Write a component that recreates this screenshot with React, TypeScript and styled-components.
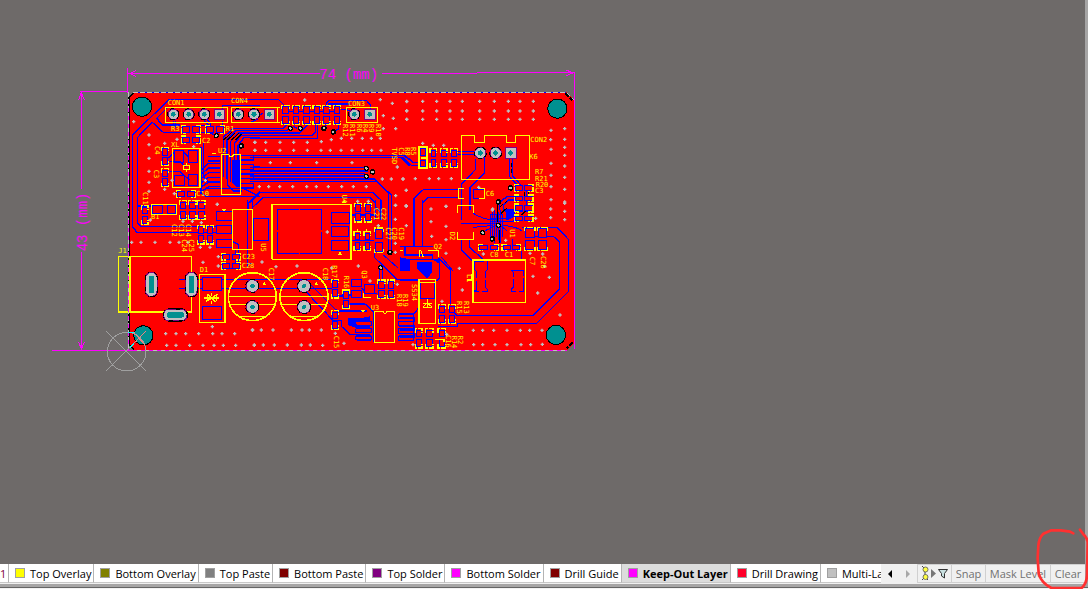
import React from 'react';
import styled, { createGlobalStyle } from 'styled-components';

const Global = createGlobalStyle`
  * { box-sizing: border-box; }
  body { margin: 0; font-family: "Open Sans", "Noto Sans", sans-serif; font-size: 11px; }
`;

const Window = styled.div`
  display: flex;
  flex-direction: column;
  min-height: 100vh;
  background: #6e6a69;
`;

const Workspace = styled.main`
  flex: 1;
  min-height: 0;
  border-right: 3px solid #a6a5a5;
`;

const Board = styled.svg`
  display: block;
  width: 600px;
  height: 400px;
`;

const Footer = styled.footer`
  position: relative;
`;

const Bar = styled.div`
  display: flex;
  height: 20px;
  background: #f0f0f0;
  border-right: 3px solid #a6a5a5;
`;

const Tabs = styled.nav`
  display: flex;
  flex: 1;
  min-width: 0;
  overflow: hidden;
`;

const Tab = styled.button<{ $active?: boolean }>`
  display: flex;
  flex: none;
  align-items: center;
  gap: 5px;
  height: 19px;
  padding: 0 2px 0 6px;
  border: 0;
  border-left: 1px solid #b4b4b4;
  border-bottom: 1px solid #c8c8c8;
  background: ${(p) => (p.$active ? '#dcdcdc' : '#fff')};
  color: #000;
  font: inherit;
  font-weight: ${(p) => (p.$active ? 700 : 400)};
  white-space: nowrap;
`;

const FirstTab = styled(Tab)`
  width: 8px;
  padding: 0;
  border-left: 0;
  color: #800040;
`;

const Swatch = styled.span<{ $color: string }>`
  width: 10px;
  height: 10px;
  border: 1px solid #a0a0a0;
  background: ${(p) => p.$color};
`;

const Tools = styled.div`
  display: flex;
  flex: none;
  height: 19px;
`;

const Arrow = styled.button`
  display: flex;
  align-items: center;
  justify-content: center;
  width: 18px;
  padding: 0;
  border: 0;
  background: #f0f0f0;
`;

const Tool = styled.button<{ $width: number }>`
  display: flex;
  align-items: center;
  justify-content: center;
  width: ${(p) => p.$width}px;
  padding: 0;
  border: 1px solid #d0d0d0;
  border-right: 0;
  background: #f0f0f0;
  color: #707070;
  font: inherit;
  white-space: nowrap;
`;

const Edge = styled.div`
  height: 5px;
  background: #f2f2f2;
  border-top: 3px solid #a6a5a5;

  &::before {
    content: "";
    display: block;
    height: 1px;
    background: #666;
  }
`;

const Markup = styled.svg`
  position: absolute;
  right: 0;
  bottom: 0;
  width: 68px;
  height: 74px;
  pointer-events: none;
`;

const YELLOW = '#ffff00';
const BLUE = '#0000ff';
const MAGENTA = '#ff00ff';
const TEAL = '#009090';
const GRAY = '#c0c0c0';

type Pt = [number, number];
type Box = [number, number, number, number];

/* The drawing uses three units to a pixel; a Region shifts its parts to one area of the board. */
const Region = ({ x, y, children }: { x: number; y: number; children: React.ReactNode }) => (
  <g transform={`translate(${x * 3} ${y * 3})`}>{children}</g>
);

const Trace = ({ d, w = 4 }: { d: string; w?: number }) => (
  <path d={d} fill="none" stroke={BLUE} strokeWidth={w} />
);
const Silk = ({ d, w = 3 }: { d: string; w?: number }) => (
  <path d={d} fill="none" stroke={YELLOW} strokeWidth={w} />
);
const Copper = ({ boxes }: { boxes: Box[] }) => (
  <>
    {boxes.map(([x, y, w, h]) => (
      <rect key={`${x},${y}`} x={x} y={y} width={w} height={h} fill="#ff0000" stroke={BLUE} strokeWidth={3} />
    ))}
  </>
);

const Chips = ({ boxes }: { boxes: Box[] }) => (
  <>
    {boxes.map(([x, y, w, h]) => {
      const wide = w > h;
      const a = wide ? w * 0.38 : h * 0.36;
      const pads: Box[] = wide
        ? [[x + 3, y + 3, a, h - 6], [x + w - a - 3, y + 3, a, h - 6]]
        : [[x + 3, y + 4, w - 6, a], [x + 3, y + h - a - 4, w - 6, a]];
      const ends = wide
        ? `M${x + 14} ${y}H${x}V${y + h}H${x + 14}M${x + w - 14} ${y}H${x + w}V${y + h}H${x + w - 14}`
        : `M${x} ${y + 12}V${y}H${x + w}V${y + 12}M${x} ${y + h - 12}V${y + h}H${x + w}V${y + h - 12}`;
      return (
        <g key={`${x},${y}`}>
          <Copper boxes={pads} />
          <path d={ends} fill="none" stroke={YELLOW} strokeWidth={4} strokeDasharray="18 3" />
        </g>
      );
    })}
  </>
);

const Stitches = ({ at }: { at: Pt[] }) => (
  <path
    d={at.map(([x, y]) => `M${x - 5} ${y}h10M${x} ${y - 5}v10`).join('')}
    stroke={GRAY}
    strokeWidth={4}
    fill="none"
    shapeRendering="auto"
  />
);

const Vias = ({ at }: { at: Pt[] }) => (
  <>
    {at.map(([x, y]) => (
      <circle key={`${x},${y}`} cx={x} cy={y} r={6} fill={GRAY} stroke="#000" strokeWidth={4} />
    ))}
  </>
);

const Pin = ({ x, y, square, r = 16, hole = 8 }: { x: number; y: number; square?: boolean; r?: number; hole?: number }) => (
  <g>
    {square ? (
      <rect x={x - r} y={y - r} width={r * 2} height={r * 2} fill={GRAY} stroke="#800080" strokeWidth={3} />
    ) : (
      <>
        <circle cx={x} cy={y} r={r} fill={GRAY} stroke="#800080" strokeWidth={3} />
        <circle cx={x} cy={y} r={r + 1} fill="none" stroke="#000" strokeWidth={3} strokeDasharray="14 8" />
      </>
    )}
    <path d={`M${x - hole} ${y}H${x + hole}M${x} ${y - hole}V${y + hole}`} stroke={TEAL} strokeWidth={4} />
    <circle cx={x} cy={y} r={hole - 1} fill={TEAL} />
  </g>
);

const Mount = ({ x, y }: { x: number; y: number }) => (
  <circle cx={x} cy={y} r={29} fill={TEAL} stroke="#000" strokeWidth={3} />
);

const Slot = ({ box: [x, y, w, h] }: { box: Box }) => (
  <g>
    <rect x={x} y={y} width={w} height={h} rx={17} fill={GRAY} stroke="#000" strokeWidth={4} />
    <rect x={x + 1} y={y + 1} width={w - 2} height={h - 2} rx={16} fill="none" stroke="#800080" strokeWidth={3} strokeDasharray="20 12" />
    <rect x={x + 10} y={y + 10} width={w - 20} height={h - 20} rx={6} fill={TEAL} />
  </g>
);

/* [text, x, y, rotation] with x, y at the baseline start */
type Mark = [string, number, number, number?];
const Marks = ({ list }: { list: Mark[] }) => (
  <g fill={YELLOW} fontFamily='"DejaVu Sans Mono", monospace' fontSize={21}>
    {list.map(([t, x, y, r = 0]) => (
      <text key={`${t},${x}`} transform={`translate(${x} ${y}) rotate(${r})`}>{t}</text>
    ))}
  </g>
);

const Capacitor = ({ x, y }: { x: number; y: number }) => (
  <g>
    <circle cx={x} cy={y} r={72} fill="none" stroke={YELLOW} strokeWidth={5} />
    <Silk d={`M${x - 72} ${y}H${x + 72}M${x - 68} ${y + 22}H${x + 68}M${x - 40} ${y + 59}H${x + 40}`} />
    <Pin x={x} y={y - 32} r={19} hole={7} />
    <Pin x={x} y={y + 31} r={19} hole={7} />
  </g>
);

const steps = (n: number) => Array.from({ length: n }, (_, i) => i);

const Pcb = () => (
  <Board viewBox="0 0 1800 1200" shapeRendering="crispEdges" role="img" aria-label="PCB layout">
    <path d="M402 276H1698L1722 300V1030L1702 1051H402L384 1035V292Z" fill="#ff0000" />
    <path d="M402 277L387 292V1033L402 1050" fill="none" stroke="#000" strokeWidth={4} />
    <path d="M1696 281L1717 302M1718 1028L1700 1046" stroke="#000" strokeWidth={6} strokeDasharray="14 3" />
    <path d="M400 278H1698" stroke={BLUE} strokeWidth={4} />

    <Region x={100} y={60}>
      <Trace d="M97 430V226L206 119H480M113 438V232L157 187L190 217H240M170 175L187 195H240M170 175L200 145M113 438H155" />
      <Trace d="M301 196H318M301 218H318M220 182V200M226 182V205M313 182L328 196M320 178L332 190V220L348 226M367 150V137H480M367 182V220M310 250V350L325 365H360M303 262V400L320 410H480M320 385H430L480 410" />
      <Trace d={steps(5).map((i) => `M${370 + i * 11} ${350 + i * 8}V${232 + i * 6}L${400 + i * 8} ${205 + i * 7}H480`).join('')} />
      <Trace d={steps(6).map((i) => `M303 ${330 + i * 13}L326 ${310 + i * 14}H360`).join('')} />
      <Trace d={steps(4).map((i) => `M424 ${286 + i * 28}H460V${300 + i * 28}H424`).join('')} />
      <Trace d="M325 290H360M325 303H360M460 320H480M460 334H480M460 349H480M460 358H480M444 450V430L480 394M383 330V375L400 393H425" />
      <path d="M397 300H422V380H408L397 368Z" fill={BLUE} />
      <path d="M370 240L395 218M382 240L405 220M394 240L417 220M406 240L425 222" stroke="#000" strokeWidth={3} />
      <Copper boxes={[[223, 270, 28, 36], [264, 270, 29, 36], [223, 345, 30, 32], [264, 343, 29, 34]]} />
      <Trace d="M251 275L264 290M206 295L223 275M206 335H240L268 360M206 305H240L258 320" />
      <Silk d="M197 142H383V188H197ZM540 142H395V188H540" />
      <Silk d="M217 266H301V382H217Z" w={4} />
      <Silk d="M300 266V384" w={6} />
      <Silk d="M364 283H385Q393 298 402 283H422V403H364Z" />
      <Silk d="M250 317H269V327H250ZM259 309V317M259 327V335" />
      <Pin x={220} y={163} /><Pin x={266} y={163} /><Pin x={313} y={163} /><Pin x={358} y={163} square />
      <Pin x={415} y={163} /><Pin x={462} y={163} />
      <Chips boxes={[[245, 196, 56, 24], [317, 196, 56, 24], [245, 228, 56, 22], [230, 391, 56, 22], [184, 262, 22, 54], [184, 326, 22, 54]]} />
      <Vias at={[[349, 227], [424, 258]]} />
      <Stitches at={[[101, 185], [147, 225], [147, 254], [147, 295], [147, 334], [147, 367], [147, 394], [231, 238], [281, 260], [194, 250], [216, 361], [316, 361], [223, 401], [194, 388], [464, 247], [464, 271], [352, 433]]} />
      <Mount x={126} y={140} />
      <Marks list={[['CON1', 203, 134], ['CON4', 393, 129], ['R3', 213, 213], ['R1', 377, 213], ['C2', 306, 248], ['XL', 213, 262], ['U2', 354, 280], ['C10', 289, 408], ['C4', 165, 258, 90], ['C3', 163, 329, 90], ['C11', 128, 396, 90]]} />
      <Silk d="M337 281H347" w={4} />
    </Region>

    <Region x={250} y={60}>
      <Trace d="M0 119H86L104 137M229 135V128L236 122H350L362 135V150M236 137V132H300M272 148H290L305 158M95 155H270M0 205H100L115 190M0 212H108L120 206M0 219H150L172 195M0 227H185L197 215V195M0 235H203V195" />
      <Trace d="M0 286H460L480 300M0 293H452L480 318M0 323H345M0 341H345M0 357H375L416 400V570M0 364H380L424 405V570M0 428L30 398H370L393 420V480M10 440L38 413H360L377 430V480" />
      <Trace d="M0 334H355M0 349H345" w={6} />
      <Trace d="M130 200L142 206M222 205L232 192M250 215L265 208V195M0 175L40 160M0 188L25 175" />
      <Silk d="M0 142H83V188H0M290 142H383V188H290Z" />
      <Pin x={12} y={163} /><Pin x={58} y={163} square /><Pin x={313} y={163} /><Pin x={359} y={163} square />
      <Chips boxes={[[94, 136, 24, 58], [127, 136, 22, 58], [157, 136, 24, 58], [189, 136, 22, 58], [218, 136, 22, 58], [250, 136, 22, 58]]} />
      <Vias at={[[121, 205], [151, 205], [222, 205], [250, 216], [349, 325], [368, 336], [349, 349]]} />
      <Stitches at={[[164, 120], [391, 119], [427, 130], [470, 125], [470, 152], [470, 178], [400, 167], [430, 175], [400, 206], [437, 206], [15, 247], [47, 247], [90, 247], [131, 247], [172, 247], [214, 245], [244, 239], [274, 235], [305, 235], [337, 235], [364, 235], [391, 235], [15, 271], [47, 271], [90, 271], [131, 271], [172, 271], [213, 271], [241, 271], [273, 271], [306, 271], [338, 271], [365, 271], [393, 271], [61, 308], [121, 308], [200, 308], [306, 308], [442, 321], [28, 380], [56, 380], [89, 380], [128, 380], [170, 380], [199, 380], [235, 380], [275, 380], [310, 380], [349, 380], [397, 357], [424, 357], [459, 357], [469, 391], [437, 407], [437, 436], [469, 437]]} />
      <Marks list={[['CON3', 294, 137], ['R12', 280, 192, 90], ['R11', 300, 192, 90], ['R6', 320, 192, 90], ['R4', 340, 192, 90], ['R9', 358, 192, 90], ['R10', 378, 192, 90], ['TVSD', 425, 262, 90], ['C5', 447, 262, 90], ['R8', 465, 262, 90], ['U4', 277, 404, 90]]} />
    </Region>

    <Region x={400} y={60}>
      <Trace d="M42 450V415L70 389H180M67 450V430L85 412H175M173 275H225M173 284H225M227 296V328L184 372V480M253 290V340L210 383V450M329 297V350L352 375M337 297V348L362 374M0 286H15L40 308H60M0 293H10L35 317H60M299 450V428L320 410H345M310 450V435L325 420H345M380 390V450" />
      <path d="M333 310V345M300 440L320 425M384 395V450M372 395V420" stroke="#000" strokeWidth={3} strokeDasharray="12 5" />
      <Silk d="M184 226H223V247H254V226H320V247H347V226H389V358H184Z" />
      <Silk d="M57 260H81V324H57Z" w={5} />
      <Copper boxes={[[60, 266, 17, 20], [60, 301, 17, 18]]} />
      <path d="M62 291H77V298H62Z" fill={YELLOW} />
      <Chips boxes={[[90, 266, 20, 56], [121, 266, 20, 56], [152, 266, 20, 56], [343, 374, 56, 20], [343, 405, 56, 20], [343, 436, 56, 20]]} />
      <Copper boxes={[[220, 388, 32, 27]]} />
      <Silk d="M191 386H176V415H191M236 386H253V415H236M173 455V437H220V455" />
      <Pin x={241} y={279} r={17} /><Pin x={287} y={279} r={17} /><Pin x={332} y={279} square r={17} />
      <Vias at={[[332, 384], [295, 425]]} />
      <Stitches at={[20, 68, 110, 150, 187, 239, 283, 325, 360, 400].flatMap((x): Pt[] => [[x, 124], [x, 153], [x, 178]])} />
      <Stitches at={[[494, 206], [453, 211], [452, 239], [494, 238], [494, 262], [453, 268], [494, 286], [453, 310], [494, 318], [453, 346], [494, 352], [453, 380], [494, 388], [453, 419], [494, 430], [68, 250], [100, 256], [131, 256], [9, 357], [46, 356], [88, 356], [116, 356], [154, 356], [19, 391], [19, 438], [138, 439], [236, 382], [278, 447]]} />
      <Mount x={472} y={146} />
      <Marks list={[['CON2', 391, 247], ['K6', 388, 297], ['R7', 405, 342], ['R21', 405, 362], ['R20', 407, 381], ['C3', 405, 398], ['C6', 257, 407], ['R5', 34, 261, 90]]} />
    </Region>

    <Region x={100} y={200}>
      <Trace d="M97 0V80L112 98H395M113 0V70L122 79H395M113 18H125M236 238H480M236 265H480M400 125L416 135V205H370M443 0V205" />
      <Trace d="M407 150V200M457 190H443M457 0V50" w={3} />
      <Copper boxes={[[350, 34, 46, 26], [350, 76, 45, 25], [350, 118, 47, 25], [307, 232, 58, 39], [307, 319, 58, 39], [158, 16, 30, 24], [201, 16, 26, 24]]} />
      <Silk d="M398 28H457V148H398ZM154 13H230V43H154ZM55 169H275V337H55Z" />
      <Silk d="M298 223H376V367H298Z" w={4} />
      <Silk d="M90 169V337M55 336H275M374 223V367" w={5} />
      <Silk d="M335 278V288M313 294H330M340 294H358M319 304L353 283M322 283L349 307M322 283V300M349 287V304M335 302V313" w={4} />
      <Chips boxes={[[124, 17, 20, 56], [238, 2, 22, 56], [266, 2, 22, 56], [293, 2, 22, 56], [292, 76, 20, 56], [320, 76, 20, 56], [365, 160, 56, 20], [365, 188, 56, 20]]} />
      <path d="M366 28H378L372 36Z" fill={YELLOW} />
      <Slot box={[136, 217, 36, 73]} />
      <Slot box={[256, 217, 36, 73]} />
      <Slot box={[190, 327, 72, 36]} />
      <Stitches at={[[95, 127], [123, 127], [165, 127], [210, 127], [237, 127], [264, 127], [151, 60], [249, 64], [277, 64], [304, 68], [352, 13], [355, 170], [355, 198], [309, 187], [301, 142], [330, 142], [197, 401], [228, 401], [257, 401], [296, 401], [337, 380], [338, 401], [366, 401], [404, 401], [458, 390], [200, 436], [228, 436], [269, 436], [309, 436], [342, 436], [370, 436], [407, 436], [463, 436]]} />
      <Mount x={130} y={406} />
      <Marks list={[['J1', 55, 158], ['D1', 299, 217], ['B1', 153, 57], ['C23', 427, 177], ['C28', 425, 204], ['C12', 215, 72, 90], ['C13', 236, 72, 90], ['C14', 257, 72, 90], ['C24', 247, 118, 90], ['C25', 268, 118, 90]]} />
    </Region>

    <Region x={250} y={200}>
      <Trace d="M0 238H245M28 265H245M168 275L250 362H275V380L300 403H360M262 333H350M300 312H345L370 335V425M373 150V172L440 238H480M388 205V240M397 205V240M300 122H373M298 45H375M303 285H277M268 288H278M335 265L350 280H380M377 0V20L395 40M393 0V60" />
      <Trace d="M184 256L262 333M400 165L445 205" w={3} />
      <path d="M295 355H330L360 349V383H318L295 376Z" fill={BLUE} />
      <Copper boxes={[[10, 55, 45, 66], [82, 29, 133, 131], [244, 36, 54, 34], [244, 79, 51, 31], [244, 121, 51, 31], [303, 238, 32, 22], [303, 270, 32, 22], [344, 254, 30, 26]]} />
      <path d="M148 26V32M148 157V163M79 92H85M212 92H218" stroke="#ff0000" strokeWidth={5} />
      <Silk d="M66 13H303V178H66ZM373 334H399Q405 346 411 334H433V427H373ZM8 28V148H0" />
      <Silk d="M66 13V178M303 13V178" w={5} />
      <g fill="#ff0000" stroke={BLUE} strokeWidth={4}>
        {[342, 364, 386, 408].map((y) => (
          <React.Fragment key={y}>
            <rect x={445} y={y} width={46} height={14} rx={4} />
            {y > 350 && <rect x={317} y={y} width={48} height={12} rx={4} />}
          </React.Fragment>
        ))}
      </g>
      <Chips boxes={[[313, 10, 22, 56], [343, 10, 22, 56], [312, 95, 20, 56], [342, 95, 20, 56], [373, 84, 28, 74], [244, 238, 22, 56], [277, 270, 22, 56], [383, 240, 22, 56], [412, 240, 22, 56], [244, 332, 22, 56]]} />
      <Silk d="M277 282V270H299V282M277 314V326H299V314M340 280V292H362" w={4} />
      <path d="M264 164H276L270 155ZM277 8H289L283 0ZM333 331H345L339 339ZM194 254H204L199 246ZM38 254H48L43 246ZM318 95H326L322 86ZM346 95H354L350 86Z" fill={YELLOW} />
      <Capacitor x={7} y={290} />
      <Capacitor x={162} y={290} />
      <Vias at={[[420, 157], [392, 203]]} />
      <Stitches at={[[232, 96], [36, 186], [78, 200], [141, 198], [245, 204], [325, 198], [436, 16], [469, 18], [436, 58], [436, 130], [436, 157], [442, 253], [385, 77], [323, 4], [355, 4], [360, 243], [7, 390], [34, 390], [69, 390], [124, 390], [156, 390], [178, 390], [214, 390], [256, 400], [13, 435], [40, 435], [73, 435], [112, 435], [154, 435], [181, 435], [218, 436], [282, 430]]} />
      <Marks list={[['U5', 32, 130, 90], ['C17', 58, 203, 90], ['C18', 220, 203, 90], ['R17', 245, 196, 90], ['R16', 282, 227, 90], ['Q3', 337, 211, 90], ['C21', 373, 23, 90], ['C22', 393, 23, 90], ['C27', 408, 82, 90], ['C20', 427, 82, 90], ['C19', 446, 82, 90], ['R18', 441, 282, 90], ['R19', 460, 282, 90], ['U3', 362, 331], ['C15', 251, 407, 90]]} />
    </Region>

    <Region x={400} y={200}>
      <Trace d="M42 0V140M67 0V140M0 140H98M184 118V150L218 183M208 118V140L248 178M365 82H470L505 118V275L410 370H172V380H115M378 109H460L479 127V266L398 347H172L152 330M116 175L152 210V313M118 180V235L105 245M0 240H55M0 340H42L60 320M0 352H42V365H0M0 377H42V390H0M0 400H42V413H0M365 152V180M15 140V165H98V178H30" />
      <Trace d="M125 172L158 212M184 70H300M220 40Q250 60 290 60M220 82L280 76M310 76Q350 80 365 92M338 118V150" w={3} />
      <Trace d={steps(7).map((i) => `M${272 + i * 6} ${42 - (i % 3) * 6}V${110 + (i % 3) * 9}`).join('')} />
      <Trace d="M270 42H310M270 55H318M270 65H340L350 50M300 75L320 92M290 76L255 92" w={3} />
      <path d="M50 185H95V218L82 236L52 208ZM0 172L30 178V212H0ZM98 178H118V192ZM316 28H345V50L318 62Z" fill={BLUE} />
      <path d="M293 10V65M304 40L320 25M298 90V130M365 45L380 28" stroke="#000" strokeWidth={4} />
      <Copper boxes={[[62, 248, 41, 48]]} />
      <path d="M223 183V208L230 214V270H223V275H262V268L256 262V216L262 208V183ZM334 210H371V275H334V268L340 262V218Z" fill="none" stroke={BLUE} strokeWidth={3} strokeDasharray="54 8" />
      <Silk d="M173 40V16H220V40M173 95V118H220V95M55 238H107V370H55ZM55 248H107M0 151H10M57 150V172M62 150L70 172M84 150H115V172" />
      <Silk d="M218 180H376V307H218ZM57 238V370M202 240H216M216 222V240" w={5} />
      <Silk d="M68 310H97M82 298V322M69 321H96M69 321L82 309L96 321" />
      <Chips boxes={[[343, 12, 56, 22], [343, 45, 56, 20], [373, 82, 32, 70], [413, 82, 30, 70], [236, 134, 60, 18], [306, 134, 56, 18], [115, 314, 22, 56], [145, 314, 22, 56], [46, 386, 20, 58], [77, 386, 22, 58], [114, 386, 22, 58]]} />
      <Silk d="M106 418H132V426" w={5} />
      <Vias at={[[295, 6], [295, 76], [248, 98], [277, 117]]} />
      <Stitches at={[[19, 18], [93, 27], [138, 19], [93, 65], [138, 79], [19, 77], [95, 109], [138, 119], [138, 160], [452, 27], [452, 53], [494, 6], [494, 34], [494, 59], [407, 55], [277, 30], [317, 121], [250, 162], [390, 160], [428, 162], [178, 205], [187, 270], [126, 304], [399, 229], [448, 232], [413, 279], [434, 199], [480, 345], [220, 391], [248, 391], [281, 391], [321, 391], [361, 391], [389, 391], [426, 391], [221, 434], [248, 434], [285, 434], [321, 434], [363, 434], [392, 434], [427, 433], [140, 403], [39, 434]]} />
      <Mount x={468} y={405} />
      <Marks list={[['Q2', 101, 146], ['C8', 270, 171], ['C1', 314, 171], ['D2', 151, 95, 90], ['U1', 330, 88, 90], ['C7', 390, 170, 90], ['C26', 423, 168, 90], ['L1', 200, 222, 90], ['SS34', 37, 252, 90], ['R15', 171, 303, 90], ['R13', 191, 303, 90], ['C16', 137, 405, 90], ['R14', 156, 407, 90], ['R2', 174, 407, 90]]} />
    </Region>

    <path d="M384 276V1050M400 276H1698L1722 300" fill="none" stroke={GRAY} strokeWidth={3} strokeDasharray="15 6" />
    <path d="M400 1051H1700" stroke={GRAY} strokeWidth={3} />
    <path d="M400 1051H1700M384 300V1050" stroke={MAGENTA} strokeWidth={3} strokeDasharray="12 12" />

    <g fill="none" stroke={MAGENTA} strokeWidth={3}>
      <path d="M383 205V280M240 275H384M383 221H960M1146 221H1432M1432 218H1722M1723 215V1046M244 275V568M244 757V1051M156 1051H402M408 212L390 221L408 230M1697 209L1718 219L1697 228M236 300L244 278L253 300M236 1026L244 1047L253 1026" />
    </g>
    <g fill={MAGENTA} fontFamily='"Liberation Mono", monospace' fontSize={42}>
      <text x={958} y={236}>74 (mm)</text>
      <text transform="translate(262 754) rotate(-90)">43 (mm)</text>
    </g>
    <g fill="none" stroke="#a0a0a0" strokeWidth={3}>
      <circle cx={380} cy={1055} r={58} />
      <path d="M318 993L438 1113M438 993L318 1113" />
      <path d="M383 997H402M390 1042L402 1030" stroke="#00ffff" />
      <path d="M406 1026L438 993M402 998L436 1036" stroke="#f08080" />
    </g>
  </Board>
);

const layers: [string, string][] = [
  ['Top Overlay', '#ffff00'],
  ['Bottom Overlay', '#808000'],
  ['Top Paste', '#808080'],
  ['Bottom Paste', '#800000'],
  ['Top Solder', '#800080'],
  ['Bottom Solder', '#ff00ff'],
  ['Drill Guide', '#800000'],
  ['Keep-Out Layer', '#ff00ff'],
  ['Drill Drawing', '#ff002a'],
  ['Multi-Layer', '#c0c0c0'],
];

export default function App() {
  return (
    <Window>
      <Global />
      <Workspace>
        <Pcb />
      </Workspace>
      <Footer>
        <Bar>
          <Tabs aria-label="Layers">
            <FirstTab>1</FirstTab>
            {layers.map(([name, color]) => (
              <Tab key={name} $active={name === 'Keep-Out Layer'}>
                <Swatch $color={color} />
                {name}
              </Tab>
            ))}
          </Tabs>
          <Tools>
            <Arrow aria-label="Previous layers">
              <svg width="6" height="8" viewBox="0 0 6 8"><path d="M5 0V8L1 4Z" fill="#000" /></svg>
            </Arrow>
            <Arrow aria-label="Next layers">
              <svg width="6" height="8" viewBox="0 0 6 8"><path d="M1 0V8L5 4Z" fill="#a8a8a8" /></svg>
            </Arrow>
            <Tool $width={34} aria-label="Filter">
              <svg width="28" height="15" viewBox="0 0 28 15">
                <path d="M1 0L4 3M1 14L4 11L7 14M4 5V9" fill="none" stroke="#444" />
                <circle cx="4.500" cy="3.500" r="2.500" fill="#ffff40" stroke="#555" strokeWidth=".8" />
                <circle cx="4.500" cy="11" r="2.500" fill="#ffff40" stroke="#555" strokeWidth=".8" />
                <path d="M10 3V12L15 7.500Z" fill="#777" />
                <path d="M17.500 3.500H26.500L23.500 7.500V12L20.500 10V7.500Z" fill="#c8e0e0" stroke="#333" />
              </svg>
            </Tool>
            <Tool $width={34}>Snap</Tool>
            <Tool $width={65}>Mask Level</Tool>
            <Tool $width={35}>Clear</Tool>
          </Tools>
        </Bar>
        <Edge />
        <Markup viewBox="0 0 204 222" aria-hidden="true">
          <path
            d="M160 55L150 50L122 46L94 46L70 56Q57 68 55 92L53 130L56 176Q65 205 94 219H185Q200 205 201 180L203 80Q200 65 190 58L180 44"
            fill="none" stroke="#ff3030" strokeWidth={8} strokeLinecap="round" strokeLinejoin="round"
          />
        </Markup>
      </Footer>
    </Window>
  );
}
